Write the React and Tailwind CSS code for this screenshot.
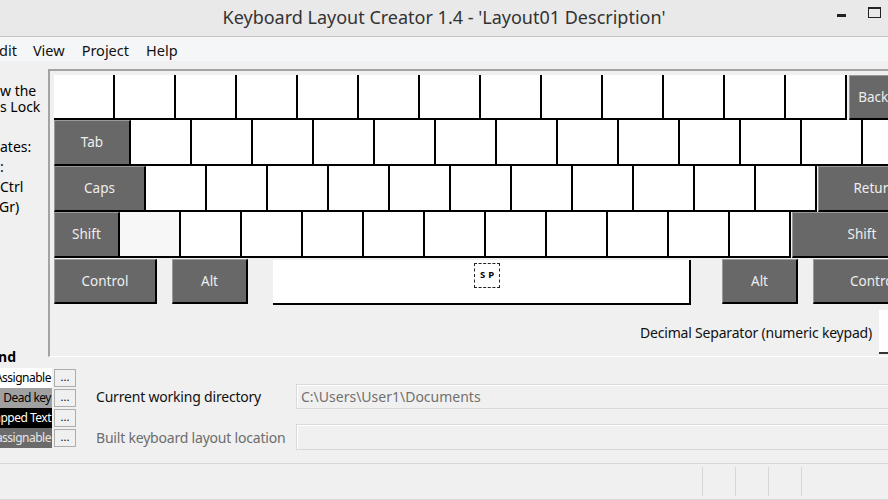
import React from "react";

const W = "bg-white border-r-2 border-b-2 border-black";
const G = "bg-[#686868] border-t border-l border-[#9a9a9a] border-r-2 border-b-2 border-r-black border-b-black text-[#eeeeee] flex items-center justify-center";

function Keys({ n, extra = "" }) {
  return Array.from({ length: n }).map((_, i) => (
    <div key={i} className={`shrink-0 w-[61px] h-full box-border ${W} ${extra}`} />
  ));
}

function Gk({ label, cls }) {
  return <div className={`shrink-0 h-full box-border ${G} ${cls}`}>{label}</div>;
}

export default function App() {
  return (
    <div className="w-[888px] h-[500px] overflow-hidden bg-[#f0f0f0] font-['Noto_Sans',sans-serif] text-black flex flex-col">
      {/* Title bar */}
      <div className="h-[37px] shrink-0 bg-[#e9e9e9] border-b border-[#c4c4c4] flex items-center relative">
        <div className="flex-1 text-center text-[18px] text-[#333333] pb-[2px]">
          Keyboard Layout Creator 1.4 - 'Layout01 Description'
        </div>
        <div className="absolute left-[837px] top-[14px] w-[9px] h-[3px] bg-[#222]" />
        <div className="absolute left-[868px] top-[7px] w-[13px] h-[11px] border border-t-2 border-[#222]" />
      </div>
      {/* Menu bar */}
      <div className="h-[24px] shrink-0 bg-[#f5f6f7] flex items-center pt-[3px] text-[14.5px] text-[#111]">
        <span className="-ml-[1px]">dit</span>
        <span className="ml-[16px]">View</span>
        <span className="ml-[17px]">Project</span>
        <span className="ml-[17px]">Help</span>
      </div>
      {/* Main area */}
      <div className="flex h-[296px] shrink-0">
        <div className="w-[48px] shrink-0 text-[14px] leading-[16px] pt-[22px] overflow-hidden whitespace-nowrap">
          <div>w the</div>
          <div>s Lock</div>
          <div className="mt-[22px] leading-[20px]">ates:</div>
          <div className="leading-[20px]">:</div>
          <div className="leading-[20px]">Ctrl</div>
          <div className="leading-[20px] -ml-[1px]">Gr)</div>
        </div>
        <div className="flex-1 mt-[8px] border-l-2 border-t-2 border-[#a3a3a3] border-b border-b-white overflow-hidden pl-[4px] pt-[4px] text-[13.5px]">
          <div className="flex h-[45px]">
            <Keys n={13} />
            <Gk label="Backspace" cls="w-[86px] ml-[2px]" />
          </div>
          <div className="flex h-[46px]">
            <Gk label="Tab" cls="w-[77px]" />
            <Keys n={13} />
          </div>
          <div className="flex h-[46px]">
            <Gk label="Caps" cls="w-[92px]" />
            <Keys n={11} />
            <Gk label="Return" cls="w-[115px] ml-[1px]" />
          </div>
          <div className="flex h-[46px]">
            <Gk label="Shift" cls="w-[66px]" />
            <div className="shrink-0 w-[61px] h-full box-border bg-[#f7f7f7] border-r-2 border-b-2 border-black" />
            <Keys n={10} />
            <Gk label="Shift" cls="w-[141px] ml-[1px]" />
          </div>
          <div className="flex h-[46px] pt-[1px]">
            <Gk label="Control" cls="w-[103px]" />
            <Gk label="Alt" cls="w-[76px] ml-[15px]" />
            <div className="shrink-0 w-[418px] ml-[25px] mt-[1px] h-[45px] box-border bg-white border-r-2 border-b-2 border-black flex justify-center pt-[3px]">
              <div className="ml-[12px] w-[26px] h-[25px] border-[1.5px] border-dashed border-[#222] text-[9.5px] font-bold flex items-center justify-center tracking-[3px] pl-[3px]">
                SP
              </div>
            </div>
            <Gk label="Alt" cls="w-[76px] ml-[31px]" />
            <Gk label="Control" cls="w-[122px] ml-[15px]" />
          </div>
          <div className="flex items-center justify-end mt-[6px] h-[44px] -mr-[51px]">
            <span className="text-[14px] text-[#111] mr-[7px] tracking-[-0.2px]">Decimal Separator (numeric keypad)</span>
            <div className="w-[60px] h-full bg-white border-b-2 border-[#333]" />
          </div>
        </div>
      </div>
      {/* Bottom section */}
      <div className="flex h-[106px] shrink-0">
        <div className="w-[76px] shrink-0 -mt-[10px] text-[12px]">
          <div className="h-[20px] w-[16px] font-bold text-[14px] leading-[20px] whitespace-nowrap overflow-hidden flex justify-end">
            <span className="shrink-0">Legend</span>
          </div>
          <div className="mt-[1px] flex flex-col">
            {[
              ["Assignable", "bg-white text-black"],
              ["Dead key", "bg-[#a0a0a0] text-black"],
              ["Mapped Text", "bg-black text-white"],
              ["Unassignable", "bg-[#6b6b6b] text-[#e6e6e6]"],
            ].map(([t, c]) => (
              <div key={t} className="flex h-[20px] items-center">
                <div className={`w-[52px] h-full overflow-hidden flex justify-end items-center whitespace-nowrap leading-[20px] pr-[1px] ${c}`}>
                  <span className="shrink-0 tracking-[-0.5px]">{t}</span>
                </div>
                <div className="ml-[2px] w-[22px] h-[18px] border border-[#adadad] bg-[#f0f0f0] text-[11px] leading-[14px] flex items-start justify-center">
                  ...
                </div>
              </div>
            ))}
          </div>
        </div>
        <div className="flex-1 flex flex-col pl-[20px] pt-[27px] gap-[15px] text-[14px]">
          <div className="flex items-center h-[25px]">
            <div className="w-[200px] shrink-0 text-[#111] tracking-[-0.2px]">Current working directory</div>
            <div className="flex-1 h-full border border-[#d9d9d9] bg-[#f0f0f0] shadow-[inset_1px_1px_0_#ffffff] flex items-center pl-[4px] text-[#707070] -mr-[20px]">
              C:\Users\User1\Documents
            </div>
          </div>
          <div className="flex items-center h-[26px]">
            <div className="w-[200px] shrink-0 text-[#6d6d6d] tracking-[-0.2px]">Built keyboard layout location</div>
            <div className="flex-1 h-full border border-[#d9d9d9] bg-[#f0f0f0] shadow-[inset_1px_1px_0_#ffffff] -mr-[20px]" />
          </div>
        </div>
      </div>
      {/* Status bar */}
      <div className="flex-1 border-t border-[#d7d7d7] border-b border-b-[#d7d7d7] flex py-[3px]">
        <div className="flex-1" />
        <div className="w-[33px] border-l border-[#d7d7d7]" />
        <div className="w-[33px] border-l border-[#d7d7d7]" />
        <div className="w-[33px] border-l border-[#d7d7d7]" />
        <div className="w-[87px] border-l border-[#d7d7d7]" />
      </div>
    </div>
  );
}
